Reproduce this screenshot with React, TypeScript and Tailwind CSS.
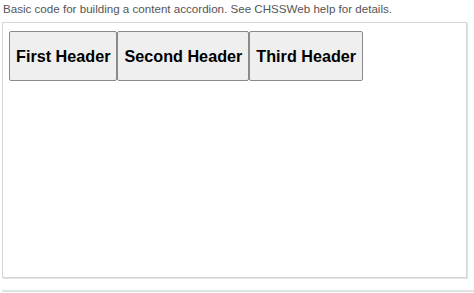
import React from "react";

export default function App() {
  const headers = ["First Header", "Second Header", "Third Header"];
  return (
    <div className="w-[474px] h-[293px] bg-white overflow-hidden" style={{ fontFamily: '"Liberation Sans", Arial, sans-serif' }}>
      <p className="pl-[3px] pt-[2px] text-[11.6px] leading-[14px] text-[#555555]">
        Basic code for building a content accordion. See CHSSWeb help for details.
      </p>
      <div className="ml-[2px] mt-[6px] w-[465px] h-[256px] border border-[#d6d6d6] shadow-[1px_1px_0_#e4e4e4] pl-[6px] pt-[8px]">
        <div className="flex">
          {headers.map((h) => (
            <button
              key={h}
              className="h-[50px] px-[6px] border border-[#8a8a8a] rounded-[2px] bg-[#efefef] text-[16.2px] font-bold text-black leading-[18px]"
            >
              {h}
            </button>
          ))}
        </div>
      </div>
      <div className="mt-[12px] ml-[2px] h-[2px] bg-[#e2e2e2]" />
    </div>
  );
}
